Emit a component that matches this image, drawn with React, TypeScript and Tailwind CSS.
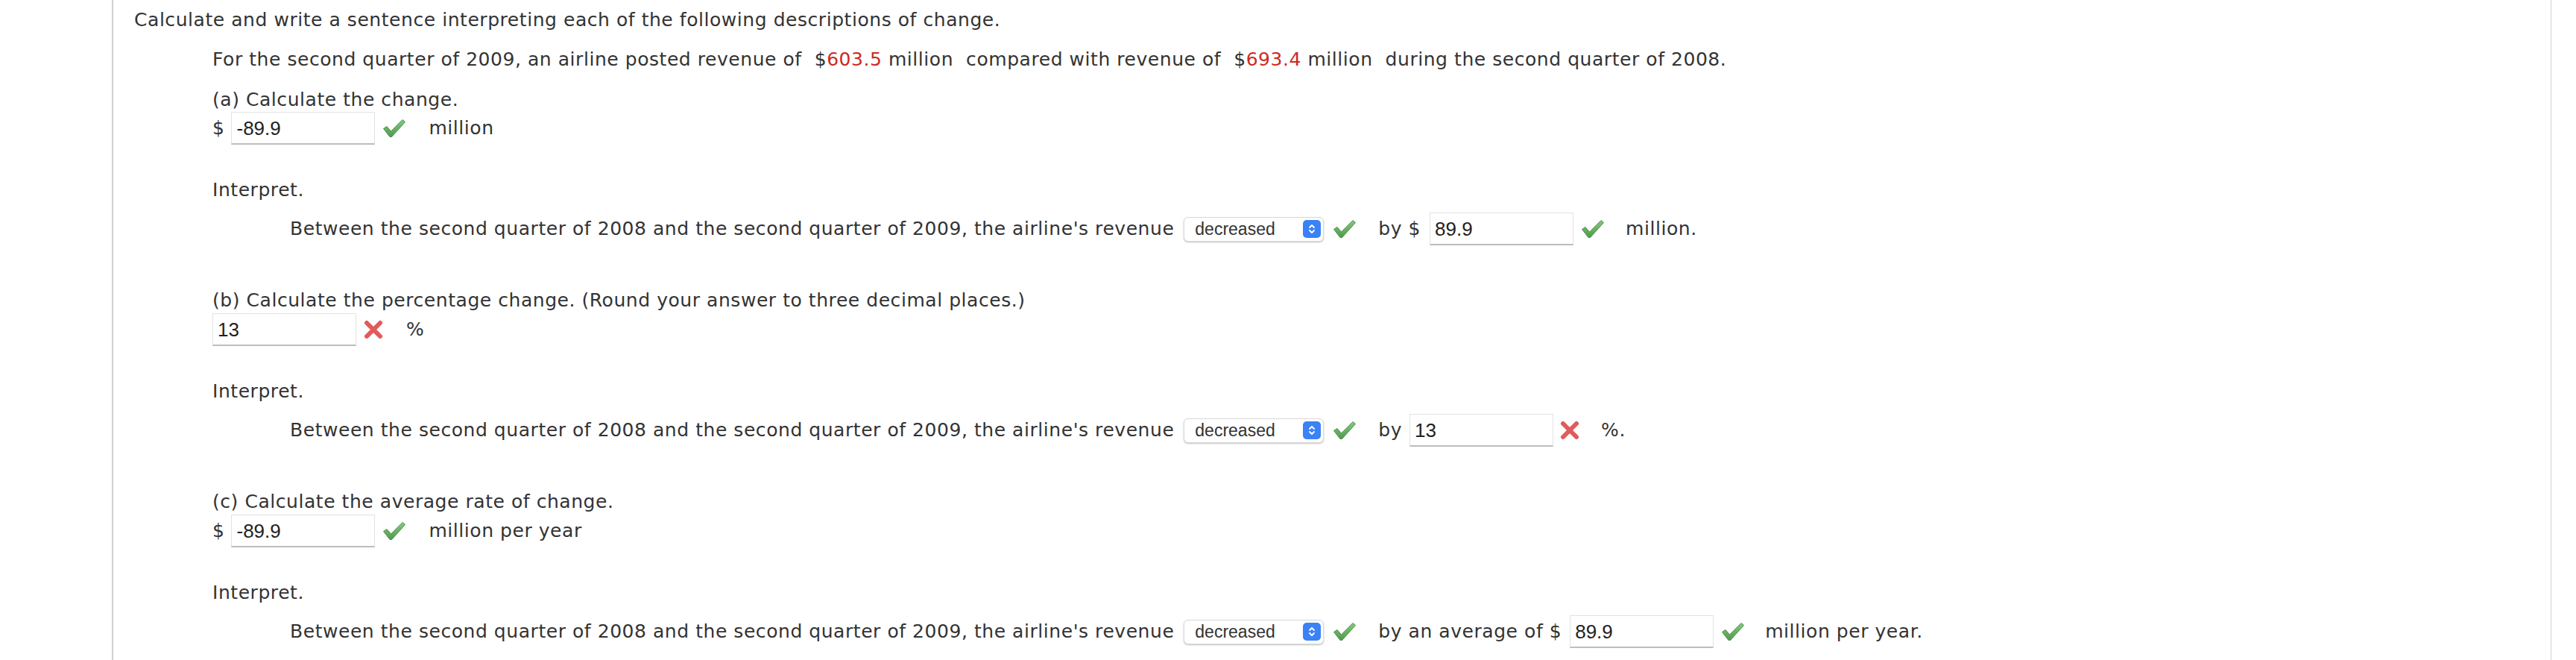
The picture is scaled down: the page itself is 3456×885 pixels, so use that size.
import type { ReactNode } from 'react';

const body = "font-['DejaVu_Sans',Verdana,sans-serif] text-[25px] tracking-[0.55px] leading-[30px] text-[#333333]";

function Check() {
  return (
    <svg width="32" height="26" viewBox="0 0 32 26" className="shrink-0">
      <defs>
        <linearGradient id="chk" x1="0" y1="0" x2="0" y2="1">
          <stop offset="0" stopColor="#86c982" />
          <stop offset="1" stopColor="#4f9a4b" />
        </linearGradient>
      </defs>
      <path
        d="M1.5 13.5 L6 10.5 L11.5 17 L27 1.5 L30.5 4.5 L12.5 24.5 L10 24.5 Z"
        fill="url(#chk)"
        stroke="#4a8f47"
        strokeWidth="1"
        strokeLinejoin="round"
      />
    </svg>
  );
}

function Cross() {
  return (
    <svg width="28" height="26" viewBox="0 0 28 26" className="shrink-0">
      <g stroke="#e15b5b" strokeWidth="6" strokeLinecap="round">
        <line x1="5" y1="4" x2="23" y2="22" />
        <line x1="23" y1="4" x2="5" y2="22" />
      </g>
    </svg>
  );
}

function Field({ value }: { value: string }) {
  return (
    <div className="w-[193px] h-[44px] shrink-0 border border-[#e2e2e2] border-b-2 border-b-[#bdbdbd] bg-white pl-[6px] flex items-center font-['Liberation_Sans',Arial,sans-serif] text-[26px] tracking-normal text-[#222]">
      {value}
    </div>
  );
}

function Select() {
  return (
    <div className="w-[188px] h-[33px] shrink-0 rounded-[6px] border border-[#d9d9d9] bg-white shadow-[0_1px_2px_rgba(0,0,0,0.25)] flex items-center justify-between pl-[14px] pr-[3px] font-['Liberation_Sans',Arial,sans-serif] text-[23px] tracking-normal text-[#333]">
      <span>decreased</span>
      <span className="w-[24px] h-[24px] rounded-[5px] bg-[#3b82f6] flex items-center justify-center">
        <svg width="12" height="18" viewBox="0 0 12 18">
          <g fill="none" stroke="#fff" strokeWidth="1.8" strokeLinecap="round" strokeLinejoin="round">
            <path d="M3 7 L6 4 L9 7" />
            <path d="M3 11 L6 14 L9 11" />
          </g>
        </svg>
      </span>
    </div>
  );
}

function Interpret({ children }: { children: ReactNode }) {
  return (
    <>
      <div className="mt-[46px]">Interpret.</div>
      <div className="mt-[15px] ml-[104px] h-[44px] flex items-center whitespace-pre">
        <span>Between the second quarter of 2008 and the second quarter of 2009, the airline's revenue</span>
        <span className="ml-[13px]">
          <Select />
        </span>
        <span className="ml-[12px]">
          <Check />
        </span>
        {children}
      </div>
    </>
  );
}

export default function App() {
  return (
    <div className="bg-white min-h-[885px] w-[3456px]">
      <div className={`ml-[150px] w-[3273px] min-h-[885px] border-l-2 border-r border-l-[#d0d0d0] border-r-[#d0d0d0] pl-[28px] pt-[12px] ${body}`}>
        <div>Calculate and write a sentence interpreting each of the following descriptions of change.</div>

        <div className="ml-[105px]">
          <div className="mt-[23px] whitespace-pre">
            For the second quarter of 2009, an airline posted revenue of  $<span className="text-[#cc2a22]">603.5</span> million  compared with revenue of  $<span className="text-[#cc2a22]">693.4</span> million  during the second quarter of 2008.
          </div>

          {/* (a) */}
          <div className="mt-[24px]">(a) Calculate the change.</div>
          <div className="mt-[1px] h-[44px] flex items-center">
            <span>$</span>
            <span className="ml-[9px]">
              <Field value="-89.9" />
            </span>
            <span className="ml-[10px]">
              <Check />
            </span>
            <span className="ml-[30px]">million</span>
          </div>

          <Interpret>
            <span className="ml-[29px]">by $</span>
            <span className="ml-[12px]">
              <Field value="89.9" />
            </span>
            <span className="ml-[10px]">
              <Check />
            </span>
            <span className="ml-[28px]">million.</span>
          </Interpret>

          {/* (b) */}
          <div className="mt-[59px]">(b) Calculate the percentage change. (Round your answer to three decimal places.)</div>
          <div className="mt-[2px] h-[44px] flex items-center">
            <Field value="13" />
            <span className="ml-[9px]">
              <Cross />
            </span>
            <span className="ml-[30px]">%</span>
          </div>

          <Interpret>
            <span className="ml-[29px]">by</span>
            <span className="ml-[10px]">
              <Field value="13" />
            </span>
            <span className="ml-[8px]">
              <Cross />
            </span>
            <span className="ml-[28px]">%.</span>
          </Interpret>

          {/* (c) */}
          <div className="mt-[59px]">(c) Calculate the average rate of change.</div>
          <div className="mt-[2px] h-[44px] flex items-center">
            <span>$</span>
            <span className="ml-[9px]">
              <Field value="-89.9" />
            </span>
            <span className="ml-[10px]">
              <Check />
            </span>
            <span className="ml-[30px]">million per year</span>
          </div>

          <Interpret>
            <span className="ml-[29px]">by an average of $</span>
            <span className="ml-[11px]">
              <Field value="89.9" />
            </span>
            <span className="ml-[10px]">
              <Check />
            </span>
            <span className="ml-[27px]">million per year.</span>
          </Interpret>
        </div>
      </div>
    </div>
  );
}
